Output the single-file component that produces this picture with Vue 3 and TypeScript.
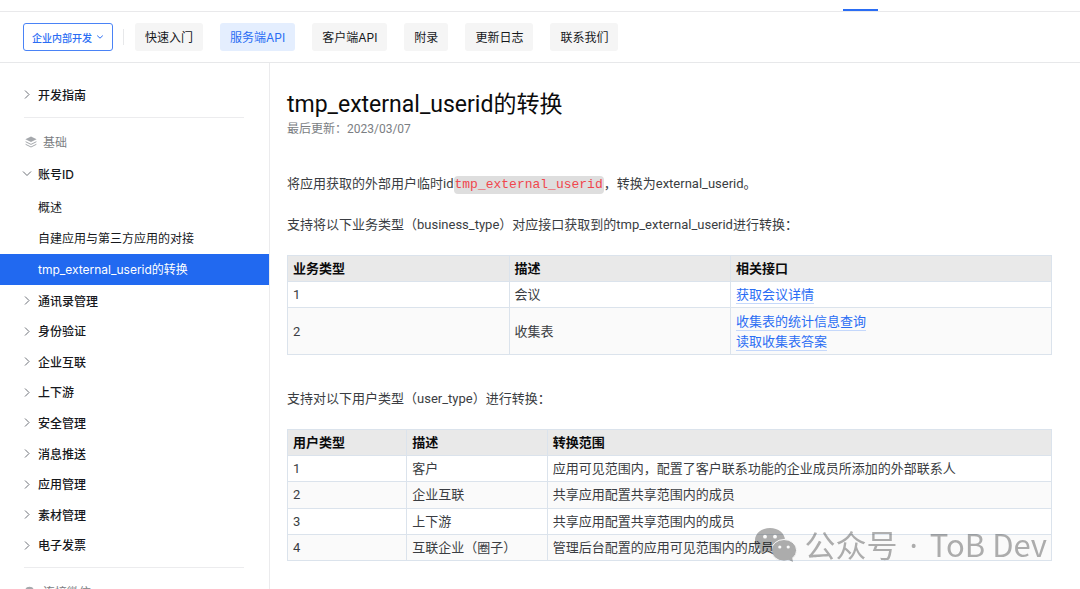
<script setup lang="ts">
import { ref } from 'vue'

interface NavItem {
  label: string
  active?: boolean
}

const scope = ref('企业内部开发')

const navItems: NavItem[] = [
  { label: '快速入门' },
  { label: '服务端API', active: true },
  { label: '客户端API' },
  { label: '附录' },
  { label: '更新日志' },
  { label: '联系我们' },
]

const accountPages: NavItem[] = [
  { label: '概述' },
  { label: '自建应用与第三方应用的对接' },
  { label: 'tmp_external_userid的转换', active: true },
]

const groups: string[] = [
  '通讯录管理',
  '身份验证',
  '企业互联',
  '上下游',
  '安全管理',
  '消息推送',
  '应用管理',
  '素材管理',
  '电子发票',
]

const businessTypes = [
  { id: 1, name: '会议', links: ['获取会议详情'] },
  { id: 2, name: '收集表', links: ['收集表的统计信息查询', '读取收集表答案'] },
]

const userTypes = [
  { id: 1, name: '客户', range: '应用可见范围内，配置了客户联系功能的企业成员所添加的外部联系人' },
  { id: 2, name: '企业互联', range: '共享应用配置共享范围内的成员' },
  { id: 3, name: '上下游', range: '共享应用配置共享范围内的成员' },
  { id: 4, name: '互联企业（圈子）', range: '管理后台配置的应用可见范围内的成员' },
]
</script>

<template>
  <div class="page">
    <header class="topbar"><span class="topbar-mark"></span></header>

    <nav class="nav">
      <div class="scope">
        <select v-model="scope" class="scope-select" aria-label="开发类型">
          <option>企业内部开发</option>
        </select>
        <svg class="scope-arrow" viewBox="0 0 8 8" aria-hidden="true"><path d="M1.2 2.6 4 5.2 6.8 2.6" /></svg>
      </div>
      <span class="nav-divider"></span>
      <div class="nav-list">
        <a
          v-for="item in navItems"
          :key="item.label"
          href="#"
          class="nav-link"
          :class="{ active: item.active }"
        >{{ item.label }}</a>
      </div>
    </nav>

    <div class="body">
      <aside class="sidebar">
        <button type="button" class="group">
          <svg class="chevron" viewBox="0 0 10 10" aria-hidden="true"><path d="M3 1.500 7 5.500 3 9.500" /></svg>
          开发指南
        </button>
        <hr class="rule" />
        <div class="section">
          <svg class="section-icon" viewBox="0 0 12 12" aria-hidden="true">
            <path class="solid" d="M6 .5 11.6 3.3 6 6.1.4 3.3Z" />
            <path d="M.6 5.7 6 8.4 11.4 5.7M.6 8.3 6 11 11.4 8.3" />
          </svg>
          基础
        </div>
        <button type="button" class="group open">
          <svg class="chevron" viewBox="0 0 10 10" aria-hidden="true"><path d="M1 3.500 5 7.500 9 3.500" /></svg>
          账号ID
        </button>
        <ul class="pages">
          <li v-for="page in accountPages" :key="page.label">
            <a href="#" class="page-link" :class="{ active: page.active }">{{ page.label }}</a>
          </li>
        </ul>
        <div class="groups">
          <button v-for="group in groups" :key="group" type="button" class="group">
            <svg class="chevron" viewBox="0 0 10 10" aria-hidden="true"><path d="M3 1.500 7 5.500 3 9.500" /></svg>
            {{ group }}
          </button>
        </div>
        <hr class="rule last" />
        <div class="section">
          <svg class="section-icon" viewBox="0 0 12 12" aria-hidden="true">
            <ellipse class="solid" cx="4.5" cy="4.5" rx="4.3" ry="3.7" />
            <ellipse class="solid" cx="8.5" cy="7.8" rx="3.2" ry="2.8" />
          </svg>
          连接微信
        </div>
      </aside>

      <main class="content">
        <h1>tmp_external_userid的转换</h1>
        <p class="updated">最后更新：2023/03/07</p>

        <p class="text">将应用获取的外部用户临时id<code>tmp_external_userid</code>，转换为external_userid。</p>
        <p class="text">支持将以下业务类型（business_type）对应接口获取到的tmp_external_userid进行转换：</p>

        <table class="business">
          <thead>
            <tr><th>业务类型</th><th>描述</th><th>相关接口</th></tr>
          </thead>
          <tbody>
            <tr v-for="row in businessTypes" :key="row.id">
              <td>{{ row.id }}</td>
              <td>{{ row.name }}</td>
              <td><div v-for="link in row.links" :key="link"><a href="#">{{ link }}</a></div></td>
            </tr>
          </tbody>
        </table>

        <p class="text">支持对以下用户类型（user_type）进行转换：</p>

        <table class="users">
          <thead>
            <tr><th>用户类型</th><th>描述</th><th>转换范围</th></tr>
          </thead>
          <tbody>
            <tr v-for="row in userTypes" :key="row.id">
              <td>{{ row.id }}</td>
              <td>{{ row.name }}</td>
              <td>{{ row.range }}</td>
            </tr>
          </tbody>
        </table>
      </main>
    </div>

    <div class="watermark">
      <svg viewBox="0 0 42 34" aria-hidden="true">
        <path d="M15 0C6.600 0 0 5.400 0 12.300c0 3.900 2.100 7.200 5.400 9.500L4 26l5-2.600c2 .6 4 .9 6.300.9 8.300-.2 14.700-5.400 14.700-12C30 5.400 23.400 0 15 0Z" />
        <ellipse class="front" cx="29" cy="22.300" rx="12.600" ry="10.800" />
        <path d="m33 31.500 5 2.500-1-5Z" />
        <g class="eyes">
          <circle cx="10" cy="8.700" r="1.900" /><circle cx="20" cy="8.700" r="1.900" />
          <circle cx="24.800" cy="19" r="1.600" /><circle cx="33.200" cy="19" r="1.600" />
        </g>
      </svg>
      <span>公众号<span class="dot">·</span>ToB Dev</span>
    </div>
  </div>
</template>

<style>
body {
  margin: 0;
  background: #fff;
}
</style>

<style scoped>
.page {
  display: flex;
  flex-direction: column;
  height: 100vh;
  overflow: hidden;
  color: #16181c;
  font-family: Inter, "Noto Sans CJK SC", sans-serif;
  font-size: 12px;
}

a {
  text-decoration: none;
}

.topbar {
  display: flex;
  flex: none;
  justify-content: flex-end;
  align-items: flex-end;
  height: 11px;
  padding-right: 202px;
  border-bottom: 1px solid #e9e9eb;
}

.topbar-mark {
  width: 35px;
  height: 2px;
  background: #2a6df4;
}

.nav {
  display: flex;
  flex: none;
  align-items: center;
  height: 50px;
  padding: 0 23px;
  border-bottom: 1px solid #e7e8ea;
}

.scope {
  position: relative;
  color: #2a6df4;
}

.scope-select {
  display: block;
  width: 90px;
  height: 28px;
  padding: 0 0 0 8px;
  appearance: none;
  border: 1px solid #4a83f6;
  border-radius: 3px;
  background: #fff;
  color: inherit;
  font: 500 10px "Noto Sans CJK SC", sans-serif;
}

.scope-arrow {
  position: absolute;
  top: 10px;
  right: 9px;
  width: 8px;
  height: 8px;
  fill: none;
  stroke: currentColor;
  pointer-events: none;
}

.nav-divider {
  width: 1px;
  height: 16px;
  margin: 0 11px 0 10px;
  background: #e7e8ea;
}

.nav-list {
  display: flex;
  gap: 17px;
}

.nav-link {
  padding: 1px 10px 0;
  border-radius: 3px;
  background: #f5f5f5;
  color: #16181c;
  line-height: 27px;
}

.nav-link.active {
  background: #e4eefe;
  color: #2a6df4;
}

.body {
  display: flex;
  flex: 1;
  min-height: 0;
}

.sidebar {
  flex: none;
  width: 269px;
  padding-top: 16px;
  border-right: 1px solid #ebebed;
  overflow: hidden;
}

.groups {
  display: grid;
  min-height: 275px;
}

.group {
  display: flex;
  align-items: center;
  gap: 6px;
  width: 100%;
  min-height: 30px;
  padding: 0 22px;
  border: 0;
  background: none;
  color: #16181c;
  font: 500 12px Inter, "Noto Sans CJK SC", sans-serif;
}

.group.open {
  margin: 1px 0 4px;
}

.chevron {
  width: 10px;
  height: 10px;
  fill: none;
  stroke: #6d7178;
}

.rule {
  height: 1px;
  margin: 8px 25px 8px 24px;
  border: 0;
  background: #ececee;
}

.rule.last {
  margin-top: 7px;
}

.section {
  display: flex;
  align-items: center;
  gap: 6px;
  height: 31px;
  padding-left: 25px;
  color: #7b7e83;
}

.section-icon {
  width: 12px;
  height: 12px;
  fill: none;
  stroke: #a5a8ac;
}

.section-icon .solid {
  fill: #a5a8ac;
  stroke: none;
}

.pages {
  margin: 0;
  padding: 0;
  list-style: none;
}

.page-link {
  display: block;
  padding-left: 38px;
  color: #16181c;
  line-height: 31px;
}

.page-link.active {
  background: #2169f0;
  color: #fff;
}

.content {
  flex: 1;
  min-width: 0;
  padding: 25px 28px 0 17px;
  color: #3a3d42;
  font-family: Roboto, "Noto Sans CJK SC", sans-serif;
}

h1 {
  margin: 0;
  color: #0b0b0c;
  font-size: 23px;
  font-weight: 400;
  line-height: 33px;
}

.updated {
  margin: 0 0 36px;
  color: #7b7e83;
  line-height: 16px;
}

.text {
  margin: 0 0 19px;
  font-size: 13px;
  line-height: 22px;
}

code {
  padding: 1px 1px 2px;
  border-radius: 4px;
  background: #dedede;
  color: #f0464d;
  font: 13px "Liberation Mono", monospace;
}

table {
  width: 100%;
  border-collapse: collapse;
  table-layout: fixed;
  font-size: 13px;
  line-height: 20px;
}

th,
td {
  box-sizing: border-box;
  padding: 3px 5px 2px;
  border: 1px solid #dbe3ec;
  text-align: left;
}

th {
  background: #e9e9e9;
  color: #0b0b0c;
  font-weight: 700;
}

tbody tr:nth-child(even) {
  background: #fafafa;
}

td a {
  padding-bottom: 1px;
  border-bottom: 1px solid #c5d8fb;
  color: #2a6df4;
  line-height: 16px;
}

.business {
  height: 100px;
  margin-bottom: 33px;
}

.business th:nth-child(-n + 2) {
  width: 29%;
}

.users {
  height: 132px;
}

.users th:nth-child(1) {
  width: 15.6%;
}

.users th:nth-child(2) {
  width: 18.4%;
}

.watermark {
  position: fixed;
  right: 33px;
  bottom: 24px;
  display: flex;
  align-items: center;
  gap: 8px;
  color: #b0b0b0;
  font: 400 31px/40px "Noto Sans CJK SC", sans-serif;
  white-space: nowrap;
  mix-blend-mode: multiply;
  pointer-events: none;
}

.watermark svg {
  width: 42px;
  height: 34px;
  fill: currentColor;
}

.watermark .front {
  stroke: #fff;
}

.watermark .eyes {
  fill: #fff;
}

.watermark .dot {
  margin: 0 12px;
  font-family: "Noto Sans", sans-serif;
}
</style>
